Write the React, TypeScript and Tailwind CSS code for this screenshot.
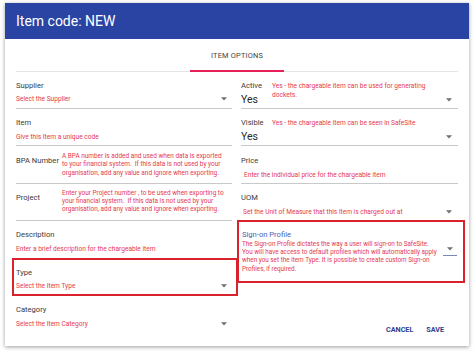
import React from "react";

const hint = "text-[#e5394f] text-[6.6px] leading-[10px]";
const label = "text-[#3a3a3a] text-[7.6px] leading-[10px]";

function Caret({ className = "" }: { className?: string }) {
  return (
    <svg className={className} width="6" height="4" viewBox="0 0 6 4" aria-hidden="true">
      <path d="M0 0.3h6L3 3.6z" fill="#6f6f6f" />
    </svg>
  );
}

export default function App() {
  return (
    <div className="w-[474px] h-[351px] bg-white pl-[5px] pt-[3px]" style={{ fontFamily: "Roboto, 'Noto Sans', sans-serif" }}>
      <div className="w-[464px] h-[343px] bg-white shadow-[0_1px_4px_rgba(0,0,0,0.4)]">
        {/* header */}
        <div className="h-[36px] bg-[#2a44a3] flex items-center pl-[11px]">
          <span className="text-white text-[14px]">Item code: NEW</span>
        </div>

        {/* tabs */}
        <div className="mx-[11px] h-[33px] flex justify-center border-b border-[#e4e4e4]">
          <div className="w-[94px] flex items-center justify-center pt-[3px] border-b-2 border-[#e8205a] -mb-px">
            <span className="text-[#444] text-[7.4px] tracking-[0.2px]">ITEM OPTIONS</span>
          </div>
        </div>

        <div className="grid grid-cols-[216px_217px] gap-x-[9px] px-[11px]">
          {/* left column */}
          <div className="flex flex-col">
            <div className="h-[37px] border-b border-[#c9c9c9] pt-[9px]">
              <div className={label}>Supplier</div>
              <div className="flex items-center justify-between mt-[3px] pr-[5px]">
                <span className={hint}>Select the Supplier</span>
                <Caret />
              </div>
            </div>
            <div className="h-[37px] border-b border-[#c9c9c9] pt-[9px]">
              <div className={label}>Item</div>
              <div className={`${hint} mt-[4px]`}>Give this Item a unique code</div>
            </div>
            <div className="h-[38px] border-b border-[#c9c9c9] flex">
              <div className={`${label} w-[46px] pt-[10px] whitespace-nowrap text-[7.3px]`}>BPA Number</div>
              <div className="text-[#e5394f] text-[6.45px] leading-[8.3px] pt-[6px] whitespace-nowrap">
                A BPA number is added and used when data is exported
                <br />
                to your financial system.&nbsp; If this data is not used by your
                <br />
                organisation, add any value and ignore when exporting.
              </div>
            </div>
            <div className="h-[37px] border-b border-[#c9c9c9] flex">
              <div className={`${label} w-[46px] pt-[9px]`}>Project</div>
              <div className="text-[#e5394f] text-[6.45px] leading-[8.1px] pt-[5px] whitespace-nowrap">
                Enter your Project number , to be used when exporting to
                <br />
                your financial system.&nbsp; If this data is not used by your
                <br />
                organisation, add any value and ignore when exporting.
              </div>
            </div>
            <div className="h-[38px] pt-[9px]">
              <div className={label}>Description</div>
              <div className={`${hint} mt-[4px]`}>Enter a brief description for the chargeable item</div>
            </div>
            <div className="h-[37px] pt-[9px] relative">
              {/* annotation box */}
              <div className="absolute -left-[4px] -right-[6px] -top-[1px] bottom-0 border-2 border-[#d9222c]" />
              <div className={label}>Type</div>
              <div className="flex items-center justify-between mt-[3px] pr-[5px]">
                <span className={hint}>Select the Item Type</span>
                <Caret />
              </div>
            </div>
            <div className="h-[38px] pt-[9px]">
              <div className={label}>Category</div>
              <div className="flex items-center justify-between mt-[4px] pr-[5px]">
                <span className={hint}>Select the Item Category</span>
                <Caret />
              </div>
            </div>
          </div>

          {/* right column */}
          <div className="flex flex-col">
            <div className="h-[37px] border-b border-[#c9c9c9] pt-[9px]">
              <div className="flex h-[10px]">
                <div className={`${label} w-[31px]`}>Active</div>
                <div className="text-[#e5394f] text-[6.6px] leading-[8.7px] pt-[1px]">
                  Yes - the chargeable item can be used for generating
                  <br />
                  dockets.
                </div>
              </div>
              <div className="flex items-center justify-between mt-[3px] pr-[6px]">
                <span className="text-[#2a2a2a] text-[10.5px] leading-[12px]">Yes</span>
                <Caret />
              </div>
            </div>
            <div className="h-[37px] border-b border-[#c9c9c9] pt-[9px]">
              <div className="flex h-[10px]">
                <div className={`${label} w-[31px]`}>Visible</div>
                <div className={hint}>Yes - the chargeable item can be seen in SafeSite</div>
              </div>
              <div className="flex items-center justify-between mt-[3px] pr-[6px]">
                <span className="text-[#2a2a2a] text-[10.5px] leading-[12px]">Yes</span>
                <Caret />
              </div>
            </div>
            <div className="h-[38px] border-b border-[#c9c9c9] pt-[10px]">
              <div className={label}>Price</div>
              <div className={`${hint} mt-[4px] ml-[3px]`}>Enter the individual price for the chargeable item</div>
            </div>
            <div className="h-[37px] pt-[9px]">
              <div className={label}>UOM</div>
              <div className="flex items-center justify-between mt-[4px] pr-[6px]">
                <span className={`${hint} ml-[2px]`}>Set the Unit of Measure that this item is charged out at</span>
                <Caret />
              </div>
            </div>
            <div className="h-[62px] relative flex pl-[1px] pt-[9px]">
              {/* annotation box */}
              <div className="absolute -left-[4px] -right-[7px] -top-[1px] bottom-0 border-2 border-[#d9222c]" />
              <div className="flex-1">
                <div className="text-[#4a5eb3] text-[7.6px] leading-[10px]">Sign-on Profile</div>
                <div className="text-[#e5394f] text-[6.35px] leading-[8.2px] whitespace-nowrap">
                  The Sign-on Profile dictates the way a user will sign-on to SafeSite.
                  <br />
                  You will have access to default profiles which will automatically apply
                  <br />
                  when you set the item Type. It is possible to create custom Sign-on
                  <br />
                  Profiles, if required.
                </div>
              </div>
              <div className="w-[14px] flex flex-col items-center pt-[17px] mr-[1px]">
                <Caret />
                <div className="mt-[4px] w-[14px] h-[1px] bg-[#7b86b8]" />
              </div>
            </div>
            <div className="flex justify-end gap-[13px] mt-[42px] pr-[14px]">
              <span className="text-[#2e3c8e] text-[7.2px] leading-[10px] font-bold">CANCEL</span>
              <span className="text-[#2e3c8e] text-[7.2px] leading-[10px] font-bold">SAVE</span>
            </div>
          </div>
        </div>
      </div>
    </div>
  );
}
